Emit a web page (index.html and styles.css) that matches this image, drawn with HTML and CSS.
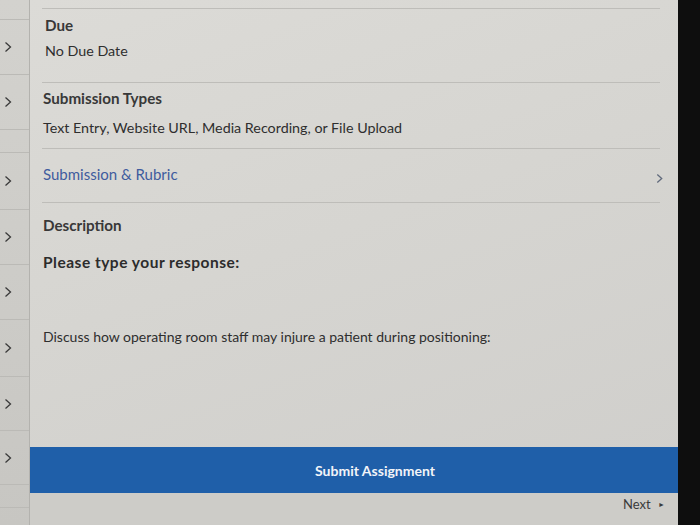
FILE: index.html
```html
<!DOCTYPE html>
<html>
<head>
<meta charset="utf-8">
<link rel="stylesheet" href="styles.css">
</head>
<body>
<div class="screen">
  <aside class="sidebar">
    <div class="cell h20"></div>
    <div class="cell h55"><svg class="chev" viewBox="0 0 8 12"><polyline points="1.5,1.5 6.5,6 1.5,10.5"/></svg></div>
    <div class="cell h55"><svg class="chev" viewBox="0 0 8 12"><polyline points="1.5,1.5 6.5,6 1.5,10.5"/></svg></div>
    <div class="cell h23"></div>
    <div class="cell h57"><svg class="chev" viewBox="0 0 8 12"><polyline points="1.5,1.5 6.5,6 1.5,10.5"/></svg></div>
    <div class="cell h55"><svg class="chev" viewBox="0 0 8 12"><polyline points="1.5,1.5 6.5,6 1.5,10.5"/></svg></div>
    <div class="cell h55"><svg class="chev" viewBox="0 0 8 12"><polyline points="1.5,1.5 6.5,6 1.5,10.5"/></svg></div>
    <div class="cell h57"><svg class="chev" viewBox="0 0 8 12"><polyline points="1.5,1.5 6.5,6 1.5,10.5"/></svg></div>
    <div class="cell h54"><svg class="chev" viewBox="0 0 8 12"><polyline points="1.5,1.5 6.5,6 1.5,10.5"/></svg></div>
    <div class="cell h54"><svg class="chev" viewBox="0 0 8 12"><polyline points="1.5,1.5 6.5,6 1.5,10.5"/></svg></div>
    <div class="cell h23"></div>
  </aside>
  <main class="main">
    <div class="content">
      <section class="sec sec1">
        <div class="label">Due</div>
        <div class="value">No Due Date</div>
      </section>
      <section class="sec sec2">
        <div class="label">Submission Types</div>
        <div class="value">Text Entry, Website URL, Media Recording, or File Upload</div>
      </section>
      <section class="sec sec3">
        <div class="link">Submission &amp; Rubric</div>
        <svg class="rchev" viewBox="0 0 8 12"><polyline points="1.5,1.5 6.5,6 1.5,10.5"/></svg>
      </section>
      <section class="sec sec4">
        <div class="label">Description</div>
        <div class="prompt">Please type your response:</div>
        <div class="value question">Discuss how operating room staff may injure a patient during positioning:</div>
      </section>
    </div>
    <div class="submit">Submit Assignment</div>
    <div class="footer">
      <span class="next">Next <span class="tri">&#9658;</span></span>
    </div>
  </main>
  <div class="edge"></div>
</div>
</body>
</html>
```

FILE: styles.css
```css
html, body {
  margin: 0;
  padding: 0;
  width: 700px;
  height: 525px;
  overflow: hidden;
  background: #111;
}
.screen {
  display: flex;
  width: 700px;
  height: 525px;
  font-family: Lato, "Open Sans", "Liberation Sans", sans-serif;
  color: #2f2f2f;
}
.sidebar {
  width: 29px;
  flex: none;
  display: flex;
  flex-direction: column;
  background: linear-gradient(180deg, #d3d2ce 0%, #cccbc7 60%, #c7c6c2 100%);
  border-right: 1px solid #b3b2ae;
}
.cell {
  flex: none;
  box-sizing: border-box;
  border-bottom: 1px solid #bbbab6;
  display: flex;
  align-items: center;
  padding-left: 4px;
}
.h20 { height: 20px; }
.h23 { height: 23px; }
.h54 { height: 54px; }
.h55 { height: 55px; }
.h57 { height: 57px; }
.chev {
  width: 8px;
  height: 12px;
  fill: none;
  stroke: #3a3a3a;
  stroke-width: 1.3;
}
.main {
  width: 648px;
  flex: none;
  display: flex;
  flex-direction: column;
  background: linear-gradient(160deg, #dcdbd7 0%, #d6d5d1 45%, #cfcecb 100%);
}
.content {
  padding: 8px 18px 0 12px;
}
.sec {
  border-top: 1px solid #bebdb9;
}
.label {
  font-size: 15.2px;
  font-weight: 700;
  line-height: 20px;
  color: #383838;
  padding-left: 1px;
}
.value {
  font-size: 14.3px;
  line-height: 20px;
  color: #2e2e2e;
  padding-left: 1px;
}
.sec1 { padding: 6px 0 21px; }
.sec1 .label { padding-left: 3px; }
.sec1 .value { margin-top: 6px; padding-left: 3px; }
.sec2 { padding: 5px 0 10px; }
.sec2 .value { margin-top: 10px; }
.sec3 {
  padding: 15px 0 18px;
  display: flex;
  justify-content: space-between;
  align-items: center;
}
.link {
  font-size: 15px;
  line-height: 20px;
  color: #3f5c9e;
  padding-left: 1px;
}
.rchev {
  width: 7px;
  height: 11px;
  margin-top: 8px;
  margin-right: -3px;
  fill: none;
  stroke: #616a7c;
  stroke-width: 1.5;
}
.sec4 { padding: 12px 0 0; }
.prompt {
  margin-top: 17px;
  font-size: 15.5px;
  font-weight: 700;
  letter-spacing: 0.5px;
  line-height: 20px;
  color: #2c2c2c;
  padding-left: 1px;
}
.question {
  margin-top: 55px;
  font-size: 14px;
}
.submit {
  margin-top: 100px;
  height: 46px;
  background: #1f5fa9;
  color: #f2f4f8;
  font-size: 14px;
  font-weight: 700;
  display: flex;
  align-items: center;
  justify-content: center;
  padding-left: 42px;
}
.footer {
  flex: 1;
  display: flex;
  justify-content: flex-end;
  align-items: flex-start;
  padding: 3px 13px 0 0;
  background: #cdccc8;
}
.next {
  font-size: 13px;
  color: #3a3a3a;
  line-height: 16px;
}
.tri {
  font-size: 7px;
  vertical-align: 2px;
  margin-left: 4px;
}
.edge {
  flex: 1;
  background: #0e0e0e;
}
```
